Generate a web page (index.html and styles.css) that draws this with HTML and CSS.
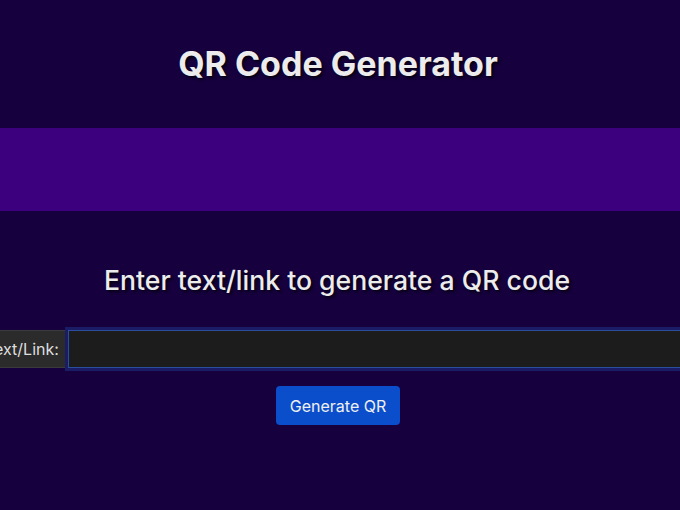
FILE: index.html
```html
<!DOCTYPE html>
<html>
<head>
<meta charset="utf-8">
<link rel="stylesheet" href="styles.css">
</head>
<body>
<header class="header"><h1 class="title">QR Code Generator</h1></header>
<div class="banner"></div>
<main class="main">
  <h2 class="subtitle">Enter text/link to generate a QR code</h2>
  <div class="group-wrap">
    <div class="input-group">
      <span class="label">Text/Link:</span>
      <input class="field" type="text" autofocus>
    </div>
  </div>
  <button class="btn">Generate QR</button>
</main>
</body>
</html>
```
FILE: styles.css
```css
html, body { margin: 0; padding: 0; }
body {
  background: #16003e;
  font-family: Inter, "Noto Sans", sans-serif;
  color: #ececec;
  overflow: hidden;
  width: 680px;
  height: 510px;
}
.header {
  height: 128px;
  display: flex;
  justify-content: center;
  align-items: flex-start;
}
.title {
  margin: 44px 4px 0 0;
  font-size: 34px;
  line-height: 40px;
  font-weight: 700;
  color: #ececec;
  text-shadow: 2px 2px 3px rgba(0,0,0,0.75);
}
.banner {
  height: 83px;
  background: #3c007f;
}
.main {
  display: flex;
  flex-direction: column;
  align-items: center;
}
.subtitle {
  margin: 53px 6px 0 0;
  font-size: 26.6px;
  line-height: 32px;
  font-weight: 500;
  color: #ececec;
  text-shadow: 2px 2px 3px rgba(0,0,0,0.75);
}
.group-wrap {
  width: 680px;
  display: flex;
  justify-content: center;
  margin-top: 34px;
}
.input-group {
  flex: 0 0 736px;
  display: flex;
  height: 38px;
}
.label {
  display: flex;
  align-items: center;
  padding: 0 9px 0 12px;
  background: #2b2b2c;
  border: 1px solid #3b3b3d;
  border-right: none;
  border-radius: 4px 0 0 4px;
  color: #dedede;
  font-size: 16px;
}
.field {
  flex: 1;
  margin: 0;
  background: #1c1c1d;
  border: 1px solid #2a4d9e;
  box-shadow: 0 0 0 3px #1a1c66;
  outline: none;
  padding: 0 12px;
  color: #ddd;
  font-size: 16px;
  font-family: inherit;
  box-sizing: border-box;
  height: 38px;
}
.btn {
  margin: 18px 4px 0 0;
  width: 124px;
  height: 39px;
  background: #0b4ecb;
  border: none;
  border-radius: 4px;
  color: #f0f0f0;
  font-family: inherit;
  font-size: 16px;
}
```
